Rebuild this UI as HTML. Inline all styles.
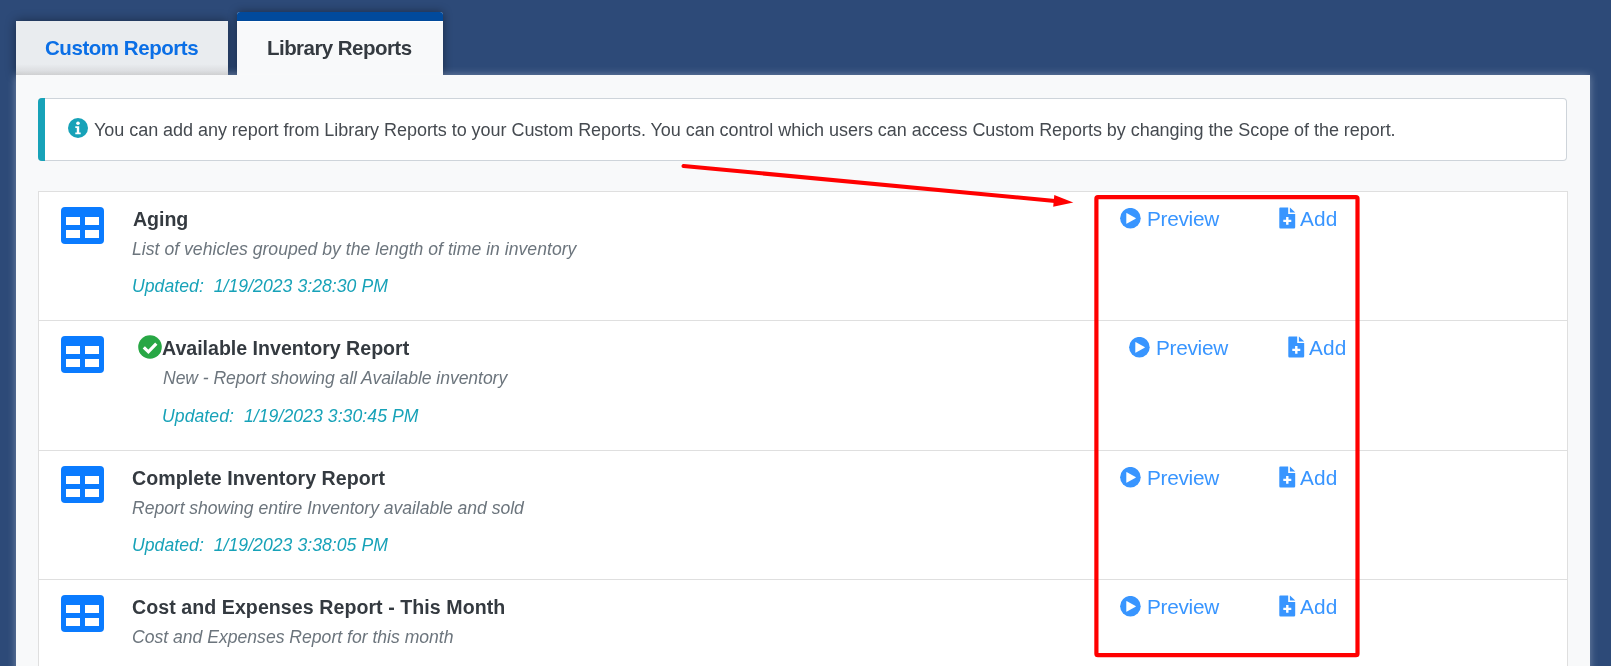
<!DOCTYPE html>
<html><head><meta charset="utf-8">
<style>
html,body{margin:0;padding:0;}
body{width:1611px;height:666px;overflow:hidden;background:#2d4a78;position:relative;font-family:"Liberation Sans",sans-serif;}
.abs{position:absolute;}
.tab1{left:16px;top:21px;width:212px;height:54px;background:linear-gradient(to bottom,#e9ecef 0,#e9ecef 80%,#dcdee1 92%,#c6c7c9 100%);box-shadow:0 0 10px rgba(0,0,0,0.42);}
.tab2{left:237px;top:12px;width:206px;height:63px;background:#f8f9fa;box-shadow:0 0 10px rgba(0,0,0,0.42);border-radius:3px 3px 0 0;}
.tab2 .bar{position:absolute;left:0;top:0;width:206px;height:9px;background:#014a9c;border-radius:3px 3px 0 0;}
.tab2 .line{position:absolute;left:0;top:9px;width:206px;height:1px;background:#ffffff;}
.panel{left:16px;top:75px;width:1574px;height:600px;background:#f8f9fa;box-shadow:0 0 8px rgba(255,255,255,0.35);}
.t{position:absolute;white-space:nowrap;line-height:1;will-change:transform;}
.tabtxt{font-weight:bold;font-size:19.5px;}
.info{left:38px;top:98px;width:1528px;height:61px;background:#fff;border:1px solid #ced4da;border-left:none;border-radius:4px;}
.info .lb{position:absolute;left:0;top:-1px;width:7px;height:63px;background:#17a2b8;border-radius:4px 0 0 4px;}
.list{left:38px;top:191px;width:1528px;height:600px;background:#fff;border:1px solid #dfdfdf;}
.div{position:absolute;left:39px;width:1528px;height:1px;background:#dfdfdf;}
.title{font-weight:bold;font-size:19.6px;color:#343a40;}
.desc{font-style:italic;font-size:17.6px;color:#6c757d;}
.upd{font-style:italic;font-size:17.6px;color:#17a2b8;}
.act{font-size:20.1px;color:#3895ff;}

</style></head><body>
<div class="abs tab1"></div>
<div class="abs tab2"><div class="bar"></div><div class="line"></div></div>
<div class="abs panel"></div>

<div class="abs info"><div class="lb"></div></div>
<svg class="abs" style="left:68px;top:118px" width="20" height="20" viewBox="0 0 20 20"><circle cx="10" cy="10" r="10" fill="#17a2b8"/><circle cx="10" cy="5.2" r="1.8" fill="#fff"/><path d="M7.3 8.2h3.9v6.2h1.5v1.9H7.3v-1.9h1.5v-4.3H7.3z" fill="#fff"/></svg>

<div class="abs list"></div>
<div class="div" style="top:320px"></div>
<div class="div" style="top:450px"></div>
<div class="div" style="top:579px"></div>

<!-- row icons -->
<svg class="abs" style="left:61px;top:207px" width="43" height="37" viewBox="0 0 43 37"><rect x="0" y="0" width="43" height="37" rx="4" fill="#0a7bff"/><rect x="5" y="10" width="14" height="8" fill="#fff"/><rect x="24" y="10" width="14" height="8" fill="#fff"/><rect x="5" y="23" width="14" height="8" fill="#fff"/><rect x="24" y="23" width="14" height="8" fill="#fff"/></svg>
<svg class="abs" style="left:61px;top:336px" width="43" height="37" viewBox="0 0 43 37"><rect x="0" y="0" width="43" height="37" rx="4" fill="#0a7bff"/><rect x="5" y="10" width="14" height="8" fill="#fff"/><rect x="24" y="10" width="14" height="8" fill="#fff"/><rect x="5" y="23" width="14" height="8" fill="#fff"/><rect x="24" y="23" width="14" height="8" fill="#fff"/></svg>
<svg class="abs" style="left:61px;top:466px" width="43" height="37" viewBox="0 0 43 37"><rect x="0" y="0" width="43" height="37" rx="4" fill="#0a7bff"/><rect x="5" y="10" width="14" height="8" fill="#fff"/><rect x="24" y="10" width="14" height="8" fill="#fff"/><rect x="5" y="23" width="14" height="8" fill="#fff"/><rect x="24" y="23" width="14" height="8" fill="#fff"/></svg>
<svg class="abs" style="left:61px;top:595px" width="43" height="37" viewBox="0 0 43 37"><rect x="0" y="0" width="43" height="37" rx="4" fill="#0a7bff"/><rect x="5" y="10" width="14" height="8" fill="#fff"/><rect x="24" y="10" width="14" height="8" fill="#fff"/><rect x="5" y="23" width="14" height="8" fill="#fff"/><rect x="24" y="23" width="14" height="8" fill="#fff"/></svg>

<!-- row 1 -->

<!-- row 2 -->
<svg class="abs" style="left:138px;top:335px" width="24" height="24" viewBox="0 0 24 24"><circle cx="12" cy="12" r="11.8" fill="#28a745"/><path d="M5.8 12.4l4.6 4.4 7.9-8.2" fill="none" stroke="#fff" stroke-width="3.2" stroke-linecap="butt" stroke-linejoin="miter"/></svg>

<!-- row 3 -->

<!-- row 4 -->

<!-- actions -->
<svg class="abs" style="left:1120px;top:207.8px" width="21" height="21" viewBox="0 0 21 21"><circle cx="10.4" cy="10.2" r="10.3" fill="#3895ff"/><path d="M6.3 5.6 Q6.3 4.8 7 5.2 L15.6 10 Q16.2 10.4 15.6 10.8 L7 15.6 Q6.3 16 6.3 15.2Z" fill="#fff"/></svg>
<svg class="abs" style="left:1279px;top:206.7px" width="17" height="22" viewBox="0 0 17 22"><path d="M1.3 0.5H9.2V6.9H16.2V20.2Q16.2 21.5 15 21.5H1.5Q0.3 21.5 0.3 20.2V1.5Q0.3 0.5 1.3 0.5Z" fill="#3895ff"/><path d="M10.9 0.5L16.2 5.6H10.9Z" fill="#3895ff"/><path d="M7.1 9.9H9.5V12.7H12.3V15.1H9.5V17.8H7.1V15.1H4.3V12.7H7.1Z" fill="#fff"/></svg>
<svg class="abs" style="left:1129px;top:336.8px" width="21" height="21" viewBox="0 0 21 21"><circle cx="10.4" cy="10.2" r="10.3" fill="#3895ff"/><path d="M6.3 5.6 Q6.3 4.8 7 5.2 L15.6 10 Q16.2 10.4 15.6 10.8 L7 15.6 Q6.3 16 6.3 15.2Z" fill="#fff"/></svg>
<svg class="abs" style="left:1288px;top:335.7px" width="17" height="22" viewBox="0 0 17 22"><path d="M1.3 0.5H9.2V6.9H16.2V20.2Q16.2 21.5 15 21.5H1.5Q0.3 21.5 0.3 20.2V1.5Q0.3 0.5 1.3 0.5Z" fill="#3895ff"/><path d="M10.9 0.5L16.2 5.6H10.9Z" fill="#3895ff"/><path d="M7.1 9.9H9.5V12.7H12.3V15.1H9.5V17.8H7.1V15.1H4.3V12.7H7.1Z" fill="#fff"/></svg>
<svg class="abs" style="left:1120px;top:466.8px" width="21" height="21" viewBox="0 0 21 21"><circle cx="10.4" cy="10.2" r="10.3" fill="#3895ff"/><path d="M6.3 5.6 Q6.3 4.8 7 5.2 L15.6 10 Q16.2 10.4 15.6 10.8 L7 15.6 Q6.3 16 6.3 15.2Z" fill="#fff"/></svg>
<svg class="abs" style="left:1279px;top:465.7px" width="17" height="22" viewBox="0 0 17 22"><path d="M1.3 0.5H9.2V6.9H16.2V20.2Q16.2 21.5 15 21.5H1.5Q0.3 21.5 0.3 20.2V1.5Q0.3 0.5 1.3 0.5Z" fill="#3895ff"/><path d="M10.9 0.5L16.2 5.6H10.9Z" fill="#3895ff"/><path d="M7.1 9.9H9.5V12.7H12.3V15.1H9.5V17.8H7.1V15.1H4.3V12.7H7.1Z" fill="#fff"/></svg>
<svg class="abs" style="left:1120px;top:595.8px" width="21" height="21" viewBox="0 0 21 21"><circle cx="10.4" cy="10.2" r="10.3" fill="#3895ff"/><path d="M6.3 5.6 Q6.3 4.8 7 5.2 L15.6 10 Q16.2 10.4 15.6 10.8 L7 15.6 Q6.3 16 6.3 15.2Z" fill="#fff"/></svg>
<svg class="abs" style="left:1279px;top:594.7px" width="17" height="22" viewBox="0 0 17 22"><path d="M1.3 0.5H9.2V6.9H16.2V20.2Q16.2 21.5 15 21.5H1.5Q0.3 21.5 0.3 20.2V1.5Q0.3 0.5 1.3 0.5Z" fill="#3895ff"/><path d="M10.9 0.5L16.2 5.6H10.9Z" fill="#3895ff"/><path d="M7.1 9.9H9.5V12.7H12.3V15.1H9.5V17.8H7.1V15.1H4.3V12.7H7.1Z" fill="#fff"/></svg>
<div class="t" id="custom" style="left:44.96px;top:38.18px;font-size:20.5px;color:#0b6fe6;font-weight:bold;letter-spacing:-0.449px;">Custom Reports</div>
<div class="t" id="library" style="left:267.28px;top:38.02px;font-size:20.5px;color:#343a40;font-weight:bold;letter-spacing:-0.544px;">Library Reports</div>
<div class="t" id="info" style="left:94.4px;top:120.8px;font-size:18px;color:#454a50;letter-spacing:-0.041px;">You can add any report from Library Reports to your Custom Reports. You can control which users can access Custom Reports by changing the Scope of the report.</div>
<div class="t" id="t1" style="left:132.64px;top:209.68px;font-size:19.6px;color:#343a40;font-weight:bold;letter-spacing:-0.06px;">Aging</div>
<div class="t" id="d1" style="left:132.4px;top:241.06px;font-size:17.6px;color:#6c757d;font-style:italic;letter-spacing:0.023px;">List of vehicles grouped by the length of time in inventory</div>
<div class="t" id="u1" style="left:131.6px;top:278.0px;font-size:17.6px;color:#17a2b8;font-style:italic;letter-spacing:0.052px;">Updated:&nbsp; 1/19/2023 3:28:30 PM</div>
<div class="t" id="t2" style="left:162.4px;top:338.58px;font-size:19.6px;color:#343a40;font-weight:bold;letter-spacing:-0.014px;">Available Inventory Report</div>
<div class="t" id="d2" style="left:162.72px;top:370.4px;font-size:17.6px;color:#6c757d;font-style:italic;letter-spacing:-0.069px;">New - Report showing all Available inventory</div>
<div class="t" id="u2" style="left:161.6px;top:408.16px;font-size:17.6px;color:#17a2b8;font-style:italic;letter-spacing:0.072px;">Updated:&nbsp; 1/19/2023 3:30:45 PM</div>
<div class="t" id="t3" style="left:132.4px;top:469.4px;font-size:19.6px;color:#343a40;font-weight:bold;letter-spacing:0.066px;">Complete Inventory Report</div>
<div class="t" id="d3" style="left:132.4px;top:499.5px;font-size:17.6px;color:#6c757d;font-style:italic;letter-spacing:-0.048px;">Report showing entire Inventory available and sold</div>
<div class="t" id="u3" style="left:131.6px;top:537.24px;font-size:17.6px;color:#17a2b8;font-style:italic;letter-spacing:0.052px;">Updated:&nbsp; 1/19/2023 3:38:05 PM</div>
<div class="t" id="t4" style="left:132.4px;top:598.44px;font-size:19.6px;color:#343a40;font-weight:bold;letter-spacing:0.057px;">Cost and Expenses Report - This Month</div>
<div class="t" id="d4" style="left:131.6px;top:628.64px;font-size:17.6px;color:#6c757d;font-style:italic;letter-spacing:-0.006px;">Cost and Expenses Report for this month</div>
<div class="t" id="p1" style="left:1146.54px;top:208.8px;font-size:20.8px;color:#3895ff;letter-spacing:-0.293px;">Preview</div>
<div class="t" id="a1" style="left:1300.34px;top:208.8px;font-size:20.8px;color:#3895ff;letter-spacing:0.12px;">Add</div>
<div class="t" id="p2" style="left:1155.54px;top:337.64px;font-size:20.8px;color:#3895ff;letter-spacing:-0.293px;">Preview</div>
<div class="t" id="a2" style="left:1309.34px;top:337.64px;font-size:20.8px;color:#3895ff;letter-spacing:0.12px;">Add</div>
<div class="t" id="p3" style="left:1146.54px;top:467.64px;font-size:20.8px;color:#3895ff;letter-spacing:-0.293px;">Preview</div>
<div class="t" id="a3" style="left:1300.34px;top:467.64px;font-size:20.8px;color:#3895ff;letter-spacing:0.12px;">Add</div>
<div class="t" id="p4" style="left:1146.54px;top:596.64px;font-size:20.8px;color:#3895ff;letter-spacing:-0.293px;">Preview</div>
<div class="t" id="a4" style="left:1300.34px;top:596.64px;font-size:20.8px;color:#3895ff;letter-spacing:0.12px;">Add</div>
<svg class="abs" style="left:0;top:0" width="1611" height="666" viewBox="0 0 1611 666"><rect x="1096.4" y="197.2" width="261.1" height="458" rx="1.5" fill="none" stroke="#ff0000" stroke-width="4.2"/><path d="M683.5 166 L1055 200.9" stroke="#ff0000" stroke-width="4" stroke-linecap="round" fill="none"/><path d="M1054.3 194.9 L1073.3 202.6 L1053.2 206.8Z" fill="#ff0000"/></svg>


</body></html>
